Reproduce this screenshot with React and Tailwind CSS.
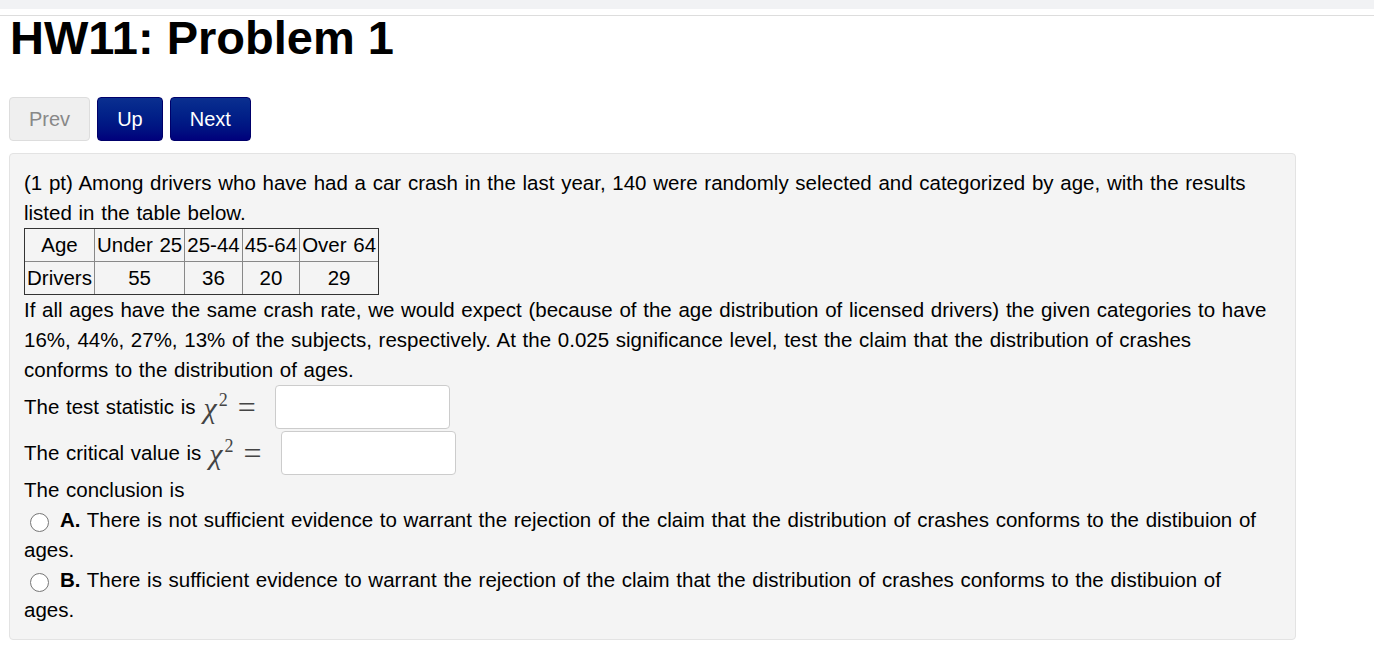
import React from 'react'

const font = { fontFamily: '"Liberation Sans", Arial, sans-serif' }

const Chi = () => (
  <span className="inline-flex items-baseline text-[#444] ml-[8px] mr-[7px]" style={{ fontFamily: '"Liberation Serif", "Times New Roman", serif' }}>
    <span className="italic text-[30px] leading-none">χ</span>
    <span className="text-[18px] leading-none relative -top-[12px] ml-[2px]">2</span>
    <span className="text-[32px] leading-none ml-[10px]">=</span>
  </span>
)

const Radio = () => (
  <span className="inline-block w-[19px] h-[19px] rounded-full border border-[#767676] bg-white align-[-5px] ml-[6px] mr-[11px]" />
)

const App = () => {
  const headers = ['Age', 'Under 25', '25-44', '45-64', 'Over 64']
  const values = ['Drivers', '55', '36', '20', '29']

  return (
    <div className="min-h-screen bg-white text-black" style={font}>
      {/* top bar */}
      <div className="h-[9px] bg-[#f1f2f4]" />
      <div className="h-[7px] border-b border-[#dddddd]" />

      <div className="px-[9px]">
        <h1 className="text-[47px] font-bold leading-[44px] pl-px">HW11: Problem 1</h1>

        {/* nav buttons */}
        <div className="flex gap-[7px] mt-[37px]">
          <button className="h-[44px] px-[19px] text-[20px] text-[#888] bg-[#efefef] border border-[#dddddd] rounded-[4px]">
            Prev
          </button>
          <button className="h-[44px] px-[19px] text-[20px] text-white bg-gradient-to-b from-[#0b2f90] to-[#00007c] border border-[#00006a] rounded-[4px]">
            Up
          </button>
          <button className="h-[44px] px-[19px] text-[20px] text-white bg-gradient-to-b from-[#0b2f90] to-[#00007c] border border-[#00006a] rounded-[4px]">
            Next
          </button>
        </div>

        {/* problem panel */}
        <div
          className="mt-[12px] w-[1287px] bg-[#f4f4f4] border border-[#e3e3e3] rounded-[4px] pl-[14px] pr-[20px] pt-[14px] pb-[14px] text-[20.5px] leading-[30px]"
          style={{ wordSpacing: '1px' }}
        >
          <p>
            (1 pt) Among drivers who have had a car crash in the last year, 140 were randomly selected and categorized by age, with the results listed in the table below.
          </p>

          <div className="inline-block border border-[#333] align-top">
            <table className="border-collapse">
              <tbody>
                <tr>
                  {headers.map((h, i) => (
                    <td
                      key={h}
                      className={`px-[2px] py-px text-center border-b border-[#888] ${i > 0 ? 'border-l' : ''}`}
                    >
                      {h}
                    </td>
                  ))}
                </tr>
                <tr>
                  {values.map((v, i) => (
                    <td
                      key={i}
                      className={`px-[2px] py-px text-center border-[#888] ${i > 0 ? 'border-l' : ''}`}
                    >
                      {v}
                    </td>
                  ))}
                </tr>
              </tbody>
            </table>
          </div>

          <p>
            If all ages have the same crash rate, we would expect (because of the age distribution of licensed drivers) the given categories to have 16%, 44%, 27%, 13% of the subjects, respectively. At the 0.025 significance level, test the claim that the distribution of crashes conforms to the distribution of ages.
          </p>

          <div className="flex items-center h-[44px] mb-[2px]">
            <span>The test statistic is</span>
            <Chi />
            <input type="text" className="ml-[12px] w-[175px] h-[44px] bg-white border border-[#cccccc] rounded-[4px]" />
          </div>
          <div className="flex items-center h-[44px]">
            <span>The critical value is</span>
            <Chi />
            <input type="text" className="ml-[12px] w-[175px] h-[44px] bg-white border border-[#cccccc] rounded-[4px]" />
          </div>

          <p>The conclusion is</p>
          <p>
            <Radio />
            <span className="font-bold">A.</span>
            {' There is not sufficient evidence to warrant the rejection of the claim that the distribution of crashes conforms to the distibuion of ages.'}
          </p>
          <p>
            <Radio />
            <span className="font-bold">B.</span>
            {' There is sufficient evidence to warrant the rejection of the claim that the distribution of crashes conforms to the distibuion of ages.'}
          </p>
        </div>
      </div>
    </div>
  )
}

export default App
